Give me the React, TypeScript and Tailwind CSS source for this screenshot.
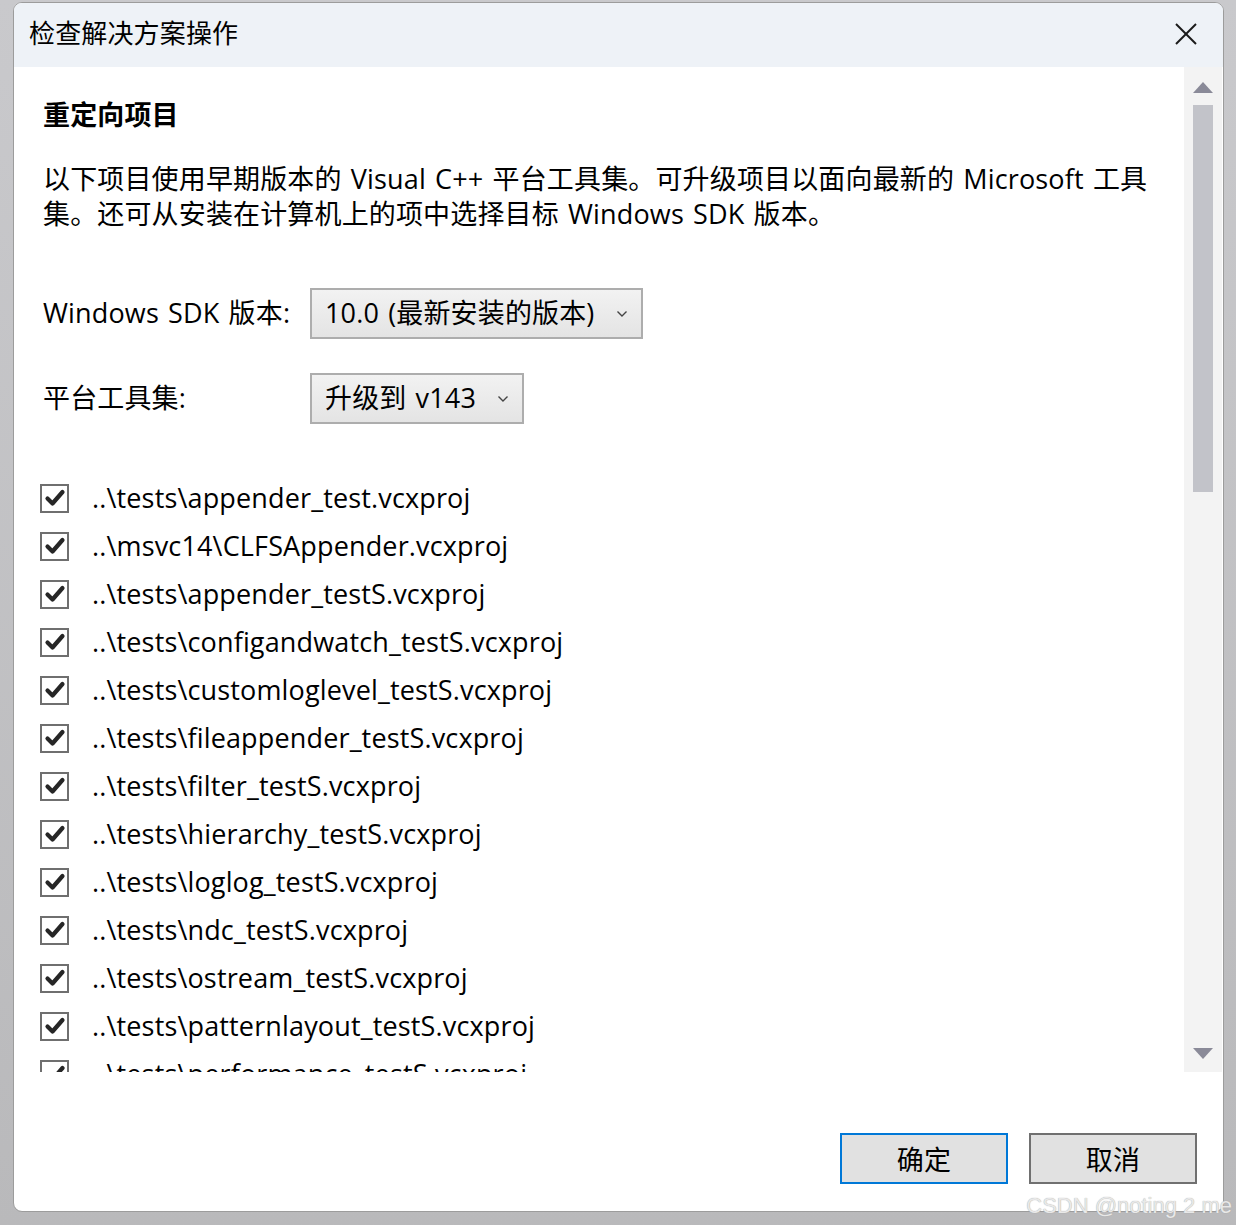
import React from "react";

const FONT = "font-['Open_Sans','Noto_Sans_CJK_SC',sans-serif] tracking-[0.15px] [word-spacing:2px]";

const projects = [
  "..\\tests\\appender_test.vcxproj",
  "..\\msvc14\\CLFSAppender.vcxproj",
  "..\\tests\\appender_testS.vcxproj",
  "..\\tests\\configandwatch_testS.vcxproj",
  "..\\tests\\customloglevel_testS.vcxproj",
  "..\\tests\\fileappender_testS.vcxproj",
  "..\\tests\\filter_testS.vcxproj",
  "..\\tests\\hierarchy_testS.vcxproj",
  "..\\tests\\loglog_testS.vcxproj",
  "..\\tests\\ndc_testS.vcxproj",
  "..\\tests\\ostream_testS.vcxproj",
  "..\\tests\\patternlayout_testS.vcxproj",
  "..\\tests\\performance_testS.vcxproj",
  "..\\tests\\priority_testS.vcxproj",
];

function Chevron() {
  return (
    <svg width="12" height="8" viewBox="0 0 12 8" fill="none" stroke="#444" strokeWidth={1.4}>
      <polyline points="1.5 1.5 6 6 10.5 1.5" />
    </svg>
  );
}

function Checkbox() {
  return (
    <div className="w-[29px] h-[29px] border-2 border-[#6f6f6f] bg-white flex items-center justify-center shrink-0">
      <svg width="22" height="20" viewBox="0 0 22 20" fill="none" stroke="#262626" strokeWidth={4.2} strokeLinecap="round" strokeLinejoin="round">
        <polyline points="3.5 10.5 8.5 15.5 18.5 4" />
      </svg>
    </div>
  );
}

function Dropdown({ label, width }: { label: string; width: string }) {
  return (
    <div className={`${width} h-[51px] border-2 border-[#adadad] bg-gradient-to-b from-[#f2f2f2] to-[#e4e4e4] flex items-center justify-between pl-[13px] pr-[13px]`}>
      <span className="text-[27px] text-black">{label}</span>
      <Chevron />
    </div>
  );
}

export default function App() {
  return (
    <div className={`${FONT} relative w-[1236px] h-[1225px] bg-gradient-to-b from-[#c9c9cc] to-[#b9b9bb] pl-[13px] pr-[12px] pt-[2px] pb-[13px]`}>
      <div className="w-full h-full rounded-[9px] border border-[#9c9c9c] bg-white overflow-hidden flex flex-col">
        <div className="h-[64px] bg-[#eef2f7] flex items-center justify-between pl-[15px] pr-[26px] pb-[3px] shrink-0">
          <span className="text-[26px] text-black">检查解决方案操作</span>
          <svg width="22" height="22" viewBox="0 0 22 22" stroke="#1a1a1a" strokeWidth={2}>
            <line x1="1" y1="1" x2="21" y2="21" />
            <line x1="21" y1="1" x2="1" y2="21" />
          </svg>
        </div>

        <div className="flex h-[1005px] shrink-0">
          <div className="flex-1 overflow-hidden pl-[29px] pt-[30px]">
            <h2 className="text-[27px] font-bold text-black leading-[36px]">重定向项目</h2>
            <p className="mt-[28px] text-[27px] leading-[35px] text-black">
              以下项目使用早期版本的 Visual C++ 平台工具集。可升级项目以面向最新的 Microsoft 工具
              <br />
              集。还可从安装在计算机上的项中选择目标 Windows SDK 版本。
            </p>

            <div className="mt-[57px] flex items-center">
              <span className="w-[267px] text-[27px] text-black">Windows SDK 版本:</span>
              <Dropdown label="10.0 (最新安装的版本)" width="w-[333px]" />
            </div>
            <div className="mt-[34px] flex items-center">
              <span className="w-[267px] text-[27px] text-black">平台工具集:</span>
              <Dropdown label="升级到 v143" width="w-[214px]" />
            </div>

            <ul className="mt-[50px] -ml-[3px]">
              {projects.map((p) => (
                <li key={p} className="h-[48px] flex items-center gap-[23px]">
                  <Checkbox />
                  <span className="text-[27px] text-black">{p}</span>
                </li>
              ))}
            </ul>
          </div>

          <div className="w-[38px] bg-[#f3f3f3] flex flex-col items-center pt-[15px] mr-[1px]">
            <svg width="20" height="11" viewBox="0 0 20 11">
              <polygon points="10 0 20 11 0 11" fill="#8a8a98" />
            </svg>
            <div className="mt-[12px] w-[20px] h-[387px] bg-[#c2c3c9]" />
            <div className="flex-1" />
            <svg width="20" height="11" viewBox="0 0 20 11" className="mb-[13px]">
              <polygon points="0 0 20 0 10 11" fill="#8a8a98" />
            </svg>
          </div>
        </div>

        <div className="flex-1 flex justify-end items-start pt-[61px] pr-[26px] gap-[21px]">
          <button className="w-[168px] h-[51px] border-2 border-[#0078d7] bg-[#e1e1e1] text-[27px] text-black pt-[3px]">确定</button>
          <button className="w-[168px] h-[51px] border-2 border-[#707070] bg-[#e1e1e1] text-[27px] text-black pt-[3px]">取消</button>
        </div>
      </div>

      <span className="absolute right-[4px] bottom-[3px] text-[22px] text-[#e8e8e8] tracking-normal [word-spacing:0] font-['Liberation_Sans',sans-serif] [text-shadow:0_0_1px_#9a9a9a]">
        CSDN @noting 2 me
      </span>
    </div>
  );
}
